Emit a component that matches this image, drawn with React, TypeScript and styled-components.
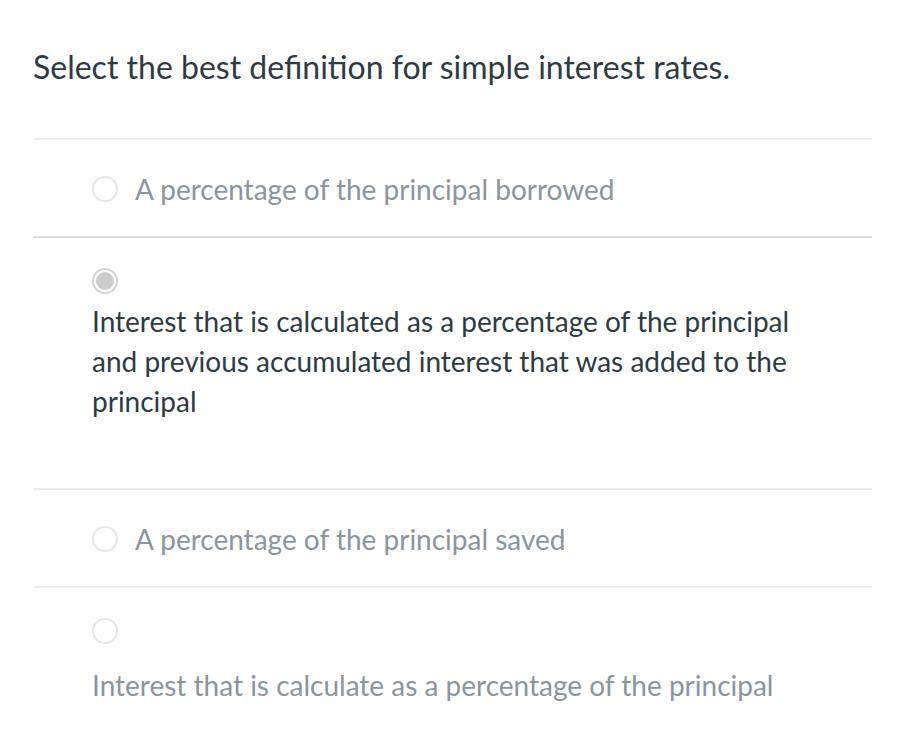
import React from 'react'
import styled, { createGlobalStyle } from 'styled-components'

const GlobalStyle = createGlobalStyle`
body {
  margin: 0;
  background: #ffffff;
  font-family: Lato, "Open Sans", sans-serif;
}
`

const Page = styled.div`
padding: 0 40px 0 33px;
`

const Question = styled.div`
font-size: 32px;
line-height: 40px;
color: #2d3b45;
padding: 47px 0 51px 0;
`

const Answer = styled.div<{ $inline?: boolean; $strong?: boolean }>`
border-top: 2px solid ${(props) => (props.$strong ? '#dedede' : '#ececec')};
padding: ${(props) => (props.$inline ? '29px 0 27px 59px' : '23px 0 0 59px')};
display: flex;
flex-direction: ${(props) => (props.$inline ? 'row' : 'column')};
align-items: ${(props) => (props.$inline ? 'center' : 'flex-start')};
gap: ${(props) => (props.$inline ? '17px' : '0')};
`

const RadioLine = styled.div`
height: 40px;
display: flex;
align-items: center;
`

const Radio = styled.span<{ $checked?: boolean }>`
box-sizing: border-box;
width: 26px;
height: 26px;
border-radius: 50%;
border: 2px solid ${(props) => (props.$checked ? '#d4d4d4' : '#e6e6e6')};
background: #ffffff;
display: flex;
align-items: center;
justify-content: center;
flex-shrink: 0;

&::after {
  content: '';
  display: ${(props) => (props.$checked ? 'block' : 'none')};
  width: 18px;
  height: 18px;
  border-radius: 50%;
  background: #cccccc;
}
`

const Label = styled.div<{ $selected?: boolean; $gap?: number; $after?: number }>`
font-size: 28px;
line-height: 40px;
color: ${(props) => (props.$selected ? '#2d3b45' : '#8b959e')};
margin-top: ${(props) => props.$gap || 0}px;
margin-bottom: ${(props) => props.$after || 0}px;
max-width: 720px;
`

export default function App() {
  return (
    <>
      <GlobalStyle />
      <Page>
        <Question>Select the best definition for simple interest rates.</Question>

        <Answer $inline>
          <Radio />
          <Label>A percentage of the principal borrowed</Label>
        </Answer>

        <Answer $strong>
          <RadioLine>
            <Radio $checked />
          </RadioLine>
          <Label $selected $after={67}>
            Interest that is calculated as a percentage of the principal and previous accumulated interest that was added to the principal
          </Label>
        </Answer>

        <Answer $inline>
          <Radio />
          <Label>A percentage of the principal saved</Label>
        </Answer>

        <Answer>
          <RadioLine>
            <Radio />
          </RadioLine>
          <Label $gap={14} $after={44}>
            Interest that is calculate as a percentage of the principal
          </Label>
        </Answer>
      </Page>
    </>
  )
}
